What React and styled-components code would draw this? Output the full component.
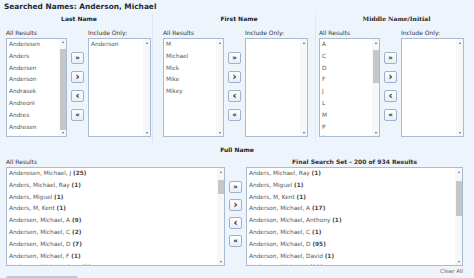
import React from 'react';
import styled, { createGlobalStyle } from 'styled-components';

const lastNames = ['Anderesen', 'Anders', 'Andersen', 'Anderson', 'Andrasek', 'Andreoni', 'Andres', 'Andresen', 'Andrews'];
const firstNames = ['M', 'Michael', 'Mick', 'Mike', 'Mikey'];
const middleNames = ['A', 'C', 'D', 'F', 'J', 'L', 'M', 'P', 'R'];

const allFull = [
    ['Anderesen, Michael, J', 25],
    ['Anders, Michael, Ray', 1],
    ['Anders, Miguel', 1],
    ['Anders, M, Kent', 1],
    ['Andersen, Michael, A', 9],
    ['Andersen, Michael, C', 2],
    ['Andersen, Michael, D', 7],
    ['Andersen, Michael, F', 1],
    ['Andersen, Michael, Gary', 1],
];

const finalFull = [
    ['Anders, Michael, Ray', 1],
    ['Anders, Miguel', 1],
    ['Anders, M, Kent', 1],
    ['Anderson, Michael, A', 17],
    ['Anderson, Michael, Anthony', 1],
    ['Anderson, Michael, C', 1],
    ['Anderson, Michael, D', 95],
    ['Anderson, Michael, David', 1],
    ['Anderson, Michael, J', 21],
];

const MoveButtons = ({ gap }) => (
    <ButtonStack $gap={gap}>
        <MoveButton>»</MoveButton>
        <MoveButton $single>›</MoveButton>
        <MoveButton $single>‹</MoveButton>
        <MoveButton>«</MoveButton>
    </ButtonStack>
);

const ScrollBar = ({ thumbTop, thumbHeight }) => (
    <Scroll>
        <Arrow $up />
        <Track>
            {thumbHeight ? <Thumb $top={thumbTop} $height={thumbHeight} /> : null}
        </Track>
        <Arrow />
    </Scroll>
);

const NamePanel = ({ title, serif, items, included, pl, thumb, last }) => (
    <Column $pl={pl} $last={last}>
        <ColumnTitle $serif={serif}>{title}</ColumnTitle>
        <PanelRow>
            <ListBlock $w={61}>
                <FieldLabel>All Results</FieldLabel>
                <Box $h={99}>
                    <Rows>
                        {items.map((n) => <Row key={n}>{n}</Row>)}
                    </Rows>
                    <ScrollBar thumbTop={thumb && thumb[0]} thumbHeight={thumb && thumb[1]} />
                </Box>
            </ListBlock>
            <MoveButtons gap={7} />
            <ListBlock $w={63}>
                <FieldLabel>Include Only:</FieldLabel>
                <Box $h={99}>
                    <Rows>
                        {included.map((n) => <Row key={n}>{n}</Row>)}
                    </Rows>
                    <ScrollBar />
                </Box>
            </ListBlock>
        </PanelRow>
    </Column>
);

const App = () => {
    return (
        <Page>
            <GlobalStyle />
            <Title>Searched Names: Anderson, Michael</Title>
            <TopRow>
                <NamePanel title="Last Name" items={lastNames} included={['Anderson']} pl={6} thumb={[4, 81]} />
                <NamePanel title="First Name" items={firstNames} included={[]} pl={10} />
                <NamePanel title="Middle Name/Initial" serif items={middleNames} included={[]} pl={3} thumb={[4, 33]} last />
            </TopRow>
            <SectionTitle>Full Name</SectionTitle>
            <BottomRow>
                <ListBlock $w={219}>
                    <FieldLabel>All Results</FieldLabel>
                    <Box $h={99}>
                        <Rows>
                            {allFull.map(([n, c]) => (
                                <Row key={n}>{n} <Count>({c})</Count></Row>
                            ))}
                        </Rows>
                        <ScrollBar thumbTop={5} thumbHeight={14} />
                    </Box>
                </ListBlock>
                <MoveButtons gap={6} />
                <ListBlock $w={217}>
                    <FieldLabel $bold $center>Final Search Set - 200 of 934 Results</FieldLabel>
                    <Box $h={99}>
                        <Rows>
                            {finalFull.map(([n, c]) => (
                                <Row key={n}>{n} <Count>({c})</Count></Row>
                            ))}
                        </Rows>
                        <ScrollBar thumbTop={6} thumbHeight={35} />
                    </Box>
                    <ClearAll>Clear All</ClearAll>
                </ListBlock>
            </BottomRow>
            <FooterButton />
        </Page>
    );
};

export default App;

// Styled components
const GlobalStyle = createGlobalStyle`
    body {
        margin: 0;
        padding: 0;
        background: #edf4fc;
        font-family: "DejaVu Sans", Verdana, sans-serif;
        color: #333;
    }
`;

const Page = styled.div`
    width: 474px;
    height: 278px;
    overflow: hidden;
    background: #edf4fc;
`;

const Title = styled.div`
    height: 14px;
    line-height: 14px;
    padding-left: 4px;
    font-size: 7.4px;
    font-weight: bold;
    color: #1f2a36;
`;

const TopRow = styled.div`
    display: grid;
    grid-template-columns: 153px 163px 158px;
    height: 128px;
`;

const Column = styled.div`
    padding-left: ${(p) => p.$pl}px;
    border-right: ${(p) => (p.$last ? 'none' : '1px solid #dce7f3')};
`;

const ColumnTitle = styled.div`
    height: 10px;
    line-height: 10px;
    text-align: center;
    font-size: 6px;
    font-weight: bold;
    font-family: ${(p) => (p.$serif ? '"DejaVu Serif", Georgia, serif' : '"DejaVu Sans", Verdana, sans-serif')};
    color: #222;
    margin-bottom: 4px;
`;

const PanelRow = styled.div`
    display: flex;
    align-items: flex-start;
    gap: 4px;
`;

const ListBlock = styled.div`
    width: ${(p) => p.$w}px;
    display: flex;
    flex-direction: column;
`;

const FieldLabel = styled.div`
    height: 10px;
    line-height: 10px;
    font-size: 6px;
    font-weight: ${(p) => (p.$bold ? 'bold' : 'normal')};
    text-align: ${(p) => (p.$center ? 'center' : 'left')};
    color: #333;
    white-space: nowrap;
`;

const Box = styled.div`
    height: ${(p) => p.$h}px;
    box-sizing: border-box;
    display: flex;
    background: #fff;
    border: 1px solid #a9bbd3;
    overflow: hidden;
`;

const Rows = styled.div`
    flex: 1;
    min-width: 0;
    padding-left: 2px;
    overflow: hidden;
`;

const Row = styled.div`
    height: 11.8px;
    line-height: 11px;
    font-size: 5.8px;
    color: #555;
    white-space: nowrap;
`;

const Count = styled.span`
    font-weight: bold;
    color: #444;
`;

const Scroll = styled.div`
    width: 7px;
    display: flex;
    flex-direction: column;
    background: #f7f7f7;
`;

const Arrow = styled.div`
    height: 7px;
    display: flex;
    align-items: center;
    justify-content: center;

    &::after {
        content: '';
        border-left: 1.5px solid transparent;
        border-right: 1.5px solid transparent;
        ${(p) => (p.$up ? 'border-bottom: 2px solid #666;' : 'border-top: 2px solid #666;')}
    }
`;

const Track = styled.div`
    flex: 1;
    display: flex;
    flex-direction: column;
    padding: 0 0.5px;
`;

const Thumb = styled.div`
    margin-top: ${(p) => p.$top}px;
    height: ${(p) => p.$height}px;
    background: #c6c6c6;
`;

const ButtonStack = styled.div`
    display: flex;
    flex-direction: column;
    gap: ${(p) => p.$gap}px;
    margin-top: 24px;
`;

const MoveButton = styled.div`
    width: 13px;
    height: 12px;
    box-sizing: border-box;
    display: flex;
    align-items: center;
    justify-content: center;
    padding-bottom: ${(p) => (p.$single ? '1px' : '0')};
    border: 1px solid #9fb2cb;
    border-radius: 2px;
    background: linear-gradient(#ffffff, #e9eef5);
    font-size: ${(p) => (p.$single ? '10px' : '7px')};
    font-weight: bold;
    line-height: 1;
    color: #222;
`;

const SectionTitle = styled.div`
    height: 15px;
    line-height: 15px;
    text-align: center;
    font-size: 6px;
    font-weight: bold;
    color: #222;
`;

const BottomRow = styled.div`
    display: flex;
    align-items: flex-start;
    gap: 4px;
    padding-left: 6px;
`;

const ClearAll = styled.div`
    height: 10px;
    line-height: 10px;
    text-align: right;
    font-size: 5.5px;
    color: #666;
`;

const FooterButton = styled.div`
    margin-left: 6px;
    width: 72px;
    height: 6px;
    border-radius: 2px 2px 0 0;
    background: #b6c9e0;
`;
